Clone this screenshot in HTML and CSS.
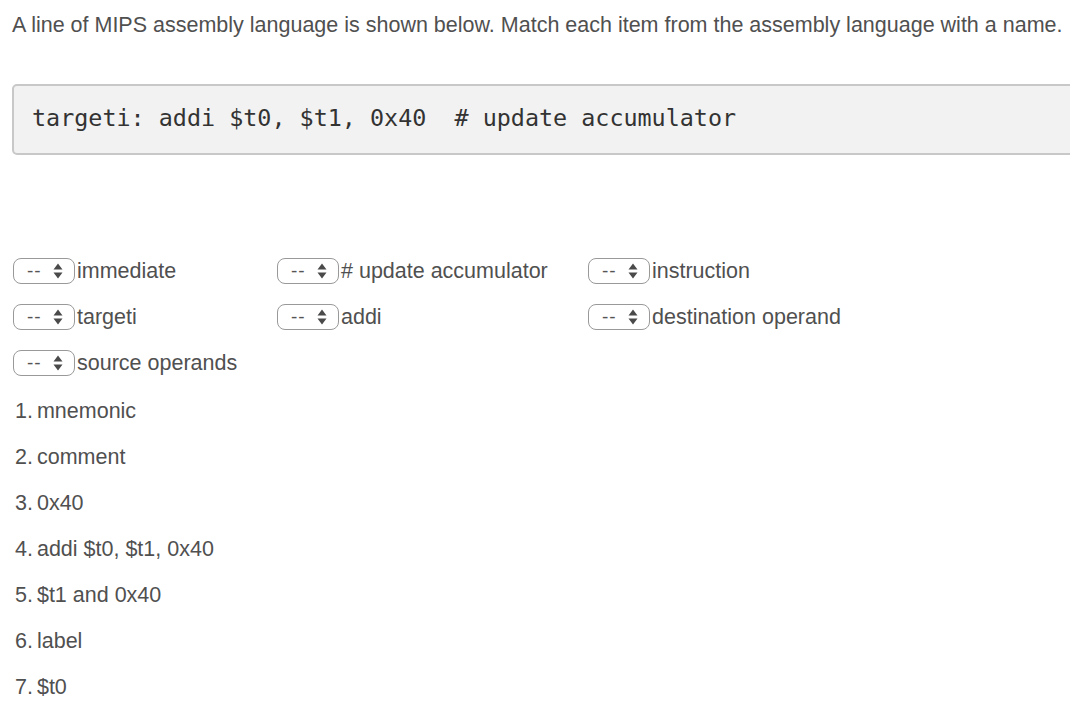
FILE: index.html
```html
<!DOCTYPE html>
<html>
<head>
<meta charset="utf-8">
<link rel="stylesheet" href="styles.css">
</head>
<body>
<p class="prompt">A line of MIPS assembly language is shown below. Match each item from the assembly language with a name.</p>
<div class="code">targeti: addi $t0, $t1, 0x40  # update accumulator</div>
<div class="matches">
  <div class="item"><span class="sel">--<svg class="arr" viewBox="0 0 10 16"><path d="M5 0.5 L9.5 6.5 H0.5 Z M5 15.5 L9.5 9.5 H0.5 Z"/></svg></span><span class="lbl">immediate</span></div>
  <div class="item"><span class="sel">--<svg class="arr" viewBox="0 0 10 16"><path d="M5 0.5 L9.5 6.5 H0.5 Z M5 15.5 L9.5 9.5 H0.5 Z"/></svg></span><span class="lbl"># update accumulator</span></div>
  <div class="item"><span class="sel">--<svg class="arr" viewBox="0 0 10 16"><path d="M5 0.5 L9.5 6.5 H0.5 Z M5 15.5 L9.5 9.5 H0.5 Z"/></svg></span><span class="lbl">instruction</span></div>
  <div class="item"><span class="sel">--<svg class="arr" viewBox="0 0 10 16"><path d="M5 0.5 L9.5 6.5 H0.5 Z M5 15.5 L9.5 9.5 H0.5 Z"/></svg></span><span class="lbl">targeti</span></div>
  <div class="item"><span class="sel">--<svg class="arr" viewBox="0 0 10 16"><path d="M5 0.5 L9.5 6.5 H0.5 Z M5 15.5 L9.5 9.5 H0.5 Z"/></svg></span><span class="lbl">addi</span></div>
  <div class="item"><span class="sel">--<svg class="arr" viewBox="0 0 10 16"><path d="M5 0.5 L9.5 6.5 H0.5 Z M5 15.5 L9.5 9.5 H0.5 Z"/></svg></span><span class="lbl">destination operand</span></div>
  <div class="item"><span class="sel">--<svg class="arr" viewBox="0 0 10 16"><path d="M5 0.5 L9.5 6.5 H0.5 Z M5 15.5 L9.5 9.5 H0.5 Z"/></svg></span><span class="lbl">source operands</span></div>
</div>
<ol class="names">
  <li><span class="num">1.</span>mnemonic</li>
  <li><span class="num">2.</span>comment</li>
  <li><span class="num">3.</span>0x40</li>
  <li><span class="num">4.</span>addi $t0, $t1, 0x40</li>
  <li><span class="num">5.</span>$t1 and 0x40</li>
  <li><span class="num">6.</span>label</li>
  <li><span class="num">7.</span>$t0</li>
</ol>
</body>
</html>
```
FILE: styles.css
```css
html, body {
  margin: 0;
  padding: 0;
  background: #fff;
  overflow: hidden;
}
body {
  padding: 0 0 0 12px;
  font-family: "Liberation Sans", Arial, sans-serif;
  color: #505050;
  font-size: 21.5px;
}
.prompt {
  margin: 0;
  padding-top: 13px;
  line-height: 24px;
  white-space: nowrap;
}
.code {
  margin-top: 47px;
  margin-right: -30px;
  height: 67px;
  box-sizing: content-box;
  border: 2px solid #c8c8c8;
  border-radius: 5px;
  background: #f2f2f2;
  font-family: "DejaVu Sans Mono", monospace;
  font-size: 23.4px;
  color: #333;
  padding-left: 18px;
  line-height: 64px;
  white-space: pre;
}
.matches {
  margin-top: 103px;
  display: grid;
  grid-template-columns: 264px 311px auto;
  row-gap: 20px;
  padding-left: 1px;
}
.item {
  display: flex;
  align-items: center;
  height: 26px;
}
.sel {
  display: inline-flex;
  align-items: center;
  box-sizing: border-box;
  width: 62px;
  height: 26px;
  border: 1.5px solid #999;
  border-radius: 8px;
  padding-left: 13px;
  font-size: 19px;
  color: #555;
  letter-spacing: 1px;
}
.arr {
  width: 10px;
  height: 16px;
  margin-left: 11px;
  fill: #4a4a4a;
}
.lbl {
  margin-left: 2px;
}
.names {
  list-style: none;
  margin: 23px 0 0 0;
  padding: 0 0 0 3px;
}
.names li {
  height: 46px;
  line-height: 24px;
}
.num {
  margin-right: 4px;
}
```
